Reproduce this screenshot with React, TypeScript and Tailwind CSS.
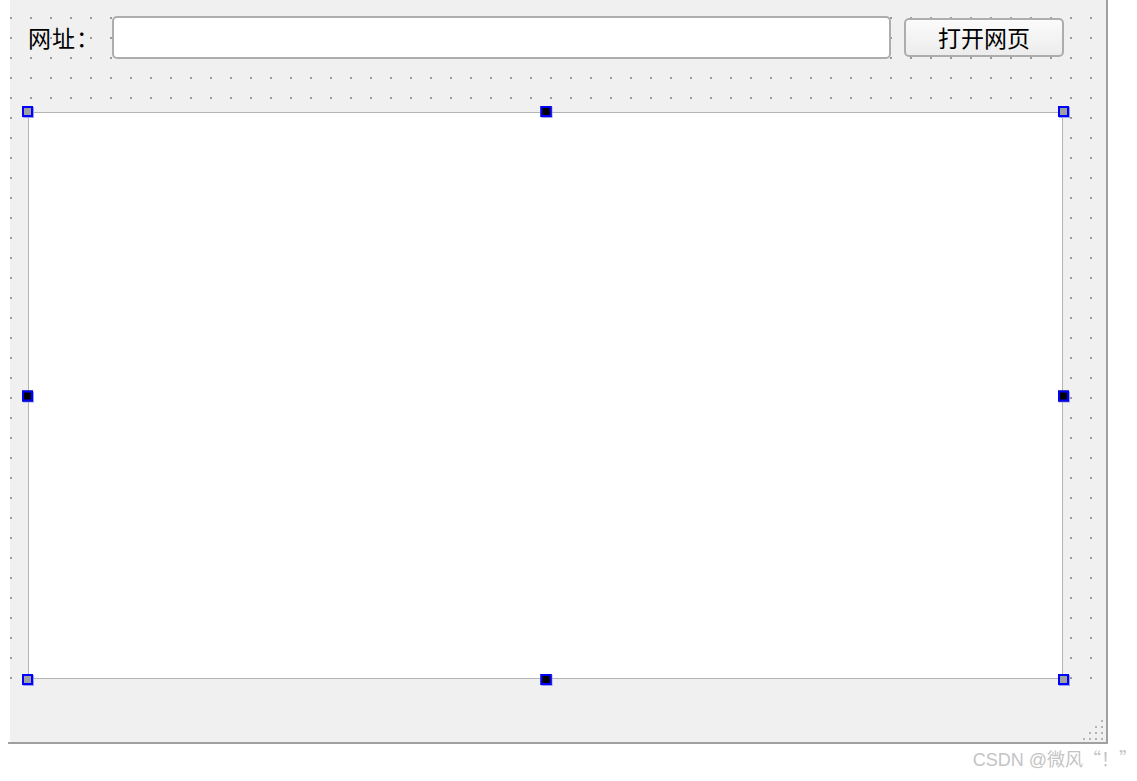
import React from "react";

const cjk = { fontFamily: '"Noto Sans CJK SC", "Noto Sans", sans-serif' };

function Handle({ pos, dark }: { pos: string; dark?: boolean }) {
  return (
    <div
      className={`absolute h-[11px] w-[11px] border-2 border-[#0000ff] shadow-[1px_1px_0_#9c9cff] ${
        dark ? "bg-black" : "bg-[#a0a0a0]"
      } ${pos}`}
    />
  );
}

function SizeGrip() {
  const dots: [number, number][] = [];
  for (let r = 0; r < 4; r++) {
    for (let c = 3 - r; c < 4; c++) dots.push([c, r]);
  }
  return (
    <svg width="22" height="22" viewBox="0 0 22 22">
      {dots.map(([c, r]) => (
        <rect key={`${c}-${r}`} x={1 + c * 6} y={1 + r * 6} width="2" height="2" fill="#b4b4b4" />
      ))}
    </svg>
  );
}

export default function App() {
  return (
    <div lang="zh-CN" className="h-[781px] w-[1137px] bg-white" style={cjk}>
      <div className="ml-[8px] h-[744px] w-[1100px] border-r-2 border-b-2 border-[#a0a0a0] bg-white">
        <div className="ml-[2px] flex h-full flex-col bg-[#f0f0f0]">
          {/* central widget with designer grid */}
          <div className="h-[690px] bg-[radial-gradient(circle_at_1px_1px,#9a9a9a_1px,transparent_1px)] bg-size-[20px_20px] bg-position-[0px_17px]">
            <div className="mt-[16px] flex h-[43px] items-center pl-[18px]">
              <span className="w-[84px] text-[23px] leading-none tracking-[1px] text-black">网址：</span>
              <div className="h-[43px] w-[779px] rounded-[5px] border-2 border-[#adadad] bg-white" />
              <button className="ml-[13px] h-[39px] w-[160px] rounded-[5px] border-2 border-[#adadad] bg-[linear-gradient(#fbfbfb,#ececec)] text-[23px] leading-none text-black">
                打开网页
              </button>
            </div>
            <div className="relative mt-[53px] ml-[18px] h-[567px] w-[1035px] border border-[#b4b4b4] bg-white">
              <Handle pos="left-[-7px] top-[-7px]" />
              <Handle pos="right-[-7px] top-[-7px]" />
              <Handle pos="left-[-7px] bottom-[-7px]" />
              <Handle pos="right-[-7px] bottom-[-7px]" />
              <Handle dark pos="left-1/2 top-[-7px] -translate-x-1/2" />
              <Handle dark pos="left-1/2 bottom-[-7px] -translate-x-1/2" />
              <Handle dark pos="left-[-7px] top-1/2 -translate-y-1/2" />
              <Handle dark pos="right-[-7px] top-1/2 -translate-y-1/2" />
            </div>
          </div>
          {/* status bar */}
          <div className="flex flex-1 items-end justify-end pr-[2px] pb-[1px]">
            <SizeGrip />
          </div>
        </div>
      </div>
      <div className="flex justify-end pt-[5px]">
        <span
          className="text-[18px] leading-none text-[#c4c4c4]"
          style={{ fontFamily: '"Liberation Sans", "Noto Sans CJK SC", sans-serif' }}
        >
          CSDN @微风
          <span className="font-['Noto_Sans_CJK_SC',sans-serif]">“！”</span>
        </span>
      </div>
    </div>
  );
}
